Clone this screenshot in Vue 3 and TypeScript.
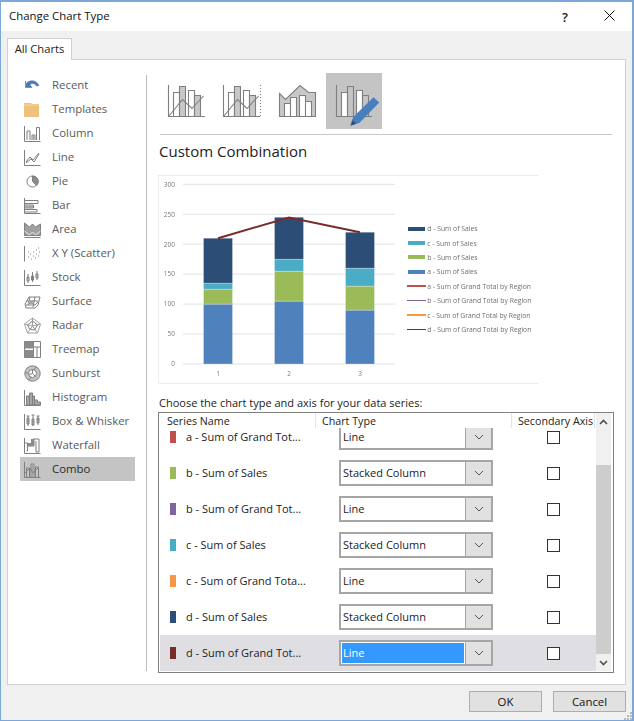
<script setup lang="ts">
const cats = [
  { n: 'Recent', i: 'recent' }, { n: 'Templates', i: 'templates' }, { n: 'Column', i: 'column' },
  { n: 'Line', i: 'line' }, { n: 'Pie', i: 'pie' }, { n: 'Bar', i: 'bar' }, { n: 'Area', i: 'area' },
  { n: 'X Y (Scatter)', i: 'scatter' }, { n: 'Stock', i: 'stock' }, { n: 'Surface', i: 'surface' },
  { n: 'Radar', i: 'radar' }, { n: 'Treemap', i: 'treemap' }, { n: 'Sunburst', i: 'sunburst' },
  { n: 'Histogram', i: 'histogram' }, { n: 'Box & Whisker', i: 'box' }, { n: 'Waterfall', i: 'waterfall' },
  { n: 'Combo', i: 'combo' },
]
const rows = [
  { n: 'a - Sum of Grand Tot...', c: '#c0504d', t: 'Line' },
  { n: 'b - Sum of Sales', c: '#9bbb59', t: 'Stacked Column' },
  { n: 'b - Sum of Grand Tot...', c: '#8064a2', t: 'Line' },
  { n: 'c - Sum of Sales', c: '#4bacc6', t: 'Stacked Column' },
  { n: 'c - Sum of Grand Tota...', c: '#f79646', t: 'Line' },
  { n: 'd - Sum of Sales', c: '#2c4d75', t: 'Stacked Column' },
  { n: 'd - Sum of Grand Tot...', c: '#772c2a', t: 'Line', sel: true },
]
const yTicks = [300, 250, 200, 150, 100, 50, 0]
const K = 0.599
const yOf = (v: number) => 188 - v * K
const bars = [
  { x: 59, s: [[0, 100, '#4f81bd'], [100, 125, '#9bbb59'], [125, 135, '#4bacc6'], [135, 210, '#2c4d75']] },
  { x: 130, s: [[0, 105, '#4f81bd'], [105, 155, '#9bbb59'], [155, 175, '#4bacc6'], [175, 245, '#2c4d75']] },
  { x: 201, s: [[0, 90, '#4f81bd'], [90, 130, '#9bbb59'], [130, 160, '#4bacc6'], [160, 220, '#2c4d75']] },
]
const legend = [
  { n: 'd - Sum of Sales', c: '#2c4d75', k: 'box' }, { n: 'c - Sum of Sales', c: '#4bacc6', k: 'box' },
  { n: 'b - Sum of Sales', c: '#9bbb59', k: 'box' }, { n: 'a - Sum of Sales', c: '#4f81bd', k: 'box' },
  { n: 'a - Sum of Grand Total by Region', c: '#c0504d', k: 'line' },
  { n: 'b - Sum of Grand Total by Region', c: '#8064a2', k: 'line' },
  { n: 'c - Sum of Grand Total by Region', c: '#f79646', k: 'line' },
  { n: 'd - Sum of Grand Total by Region', c: '#772c2a', k: 'line' },
]
</script>

<template>
  <div class="win">
    <header class="title">
      <span class="title-text">Change Chart Type</span>
      <span class="help">?</span>
      <svg class="close" width="11" height="11" viewBox="0 0 11 11"><path d="M.5.5l10 10M10.500.5l-10 10" stroke="#111" fill="none" /></svg>
    </header>

    <main class="body">
      <div class="tab">All Charts</div>
      <section class="panel">
        <nav class="side">
          <div v-for="c in cats" :key="c.n" class="cat" :class="{ on: c.i === 'combo' }">
            <svg class="ci" width="17" height="17" viewBox="0 0 17 17" fill="none" stroke="#7f7f7f">
              <template v-if="c.i === 'recent'"><path d="M2 7C5 2.500 12 2.500 15 8.500L12.500 9C10.500 6 7.500 6 6 8l2 2.500H1.500V4z" fill="#4a7ab5" stroke="#4a7ab5" stroke-width=".6" /></template>
              <template v-else-if="c.i === 'templates'"><path d="M0 2h7l1 1h7v13H0z" fill="#eec27d" stroke="none" /><path d="M0 4h15" stroke="#f5d9a8" /></template>
              <template v-else-if="c.i === 'column'"><path d="M.5 1v15.500h16M3 15V6h3v9M8 15v-5h3v5M12.500 15V2.500h3V15" /><path d="M8.500 10h2v5h-2z" fill="#a6a6a6" stroke="none" /></template>
              <template v-else-if="c.i === 'line'"><path d="M.5 1v15.500h16M2 13l4-5 3 3 6-7M2 14l5-4 3 3 5-8" /></template>
              <template v-else-if="c.i === 'pie'"><circle cx="8.500" cy="8.500" r="5.500" /><path d="M8.500 3v5.500l4 4A5.500 5.500 0 0 0 8.500 3z" fill="#8c8c8c" /></template>
              <template v-else-if="c.i === 'bar'"><path d="M.5 1v15.500h16M.5 3.500H14v3H.5M.5 8h9v3H.5M.5 12.500h12.500v2.500H.5" /><path d="M1 8.500h8V11H1z" fill="#a6a6a6" stroke="none" /></template>
              <template v-else-if="c.i === 'area'"><path d="M.5 2l5 4 3-3 3 3 5-3v11.500H.5z" fill="#a0a0a0" /><path d="M.5 10l5 4 3-3 3 3 5-4" stroke="#e8e8e8" /><path d="M.5 16.500h16" /></template>
              <template v-else-if="c.i === 'scatter'"><path d="M.5 1v15.500" /><path d="M4 12h1M7 14h1M6 9h1M9 11h1M9 7h1M12 9h1M12 5h1M14 3h1M14 11h1M4 7h1M11 13h1M15 7h1" /></template>
              <template v-else-if="c.i === 'stock'"><path d="M.5 1v15.500h16M4 5v9M8.500 3v10M13 2v9M3 8h2v4H3zM7.500 7h2v4h-2zM12 5h2v4h-2z" /></template>
              <template v-else-if="c.i === 'surface'"><path d="M1 11l4-7h11l-2 8-3 3H2zM3 8h11M6 4l-2 8M11 4L9 14M2 12h9l3-3" /><path d="M5 8l5-1-1 4H4z" fill="#a6a6a6" stroke="none" /></template>
              <template v-else-if="c.i === 'radar'"><path d="M8.500 1l8 6-3 9h-10l-3-9zM8.500 1v8M.5 7l8 2 8-2M3.500 16l5-7 5 7" stroke="#a0a0a0" /><path d="M8.500 4l5 4-3 5-5-1-2-4z" stroke="#7f7f7f" /></template>
              <template v-else-if="c.i === 'treemap'"><path d="M.5.5h16v16H.5zM9.500.5v16M9.500 6h7M13 6v10.500" /><path d="M.5.500h9v7h-9zM.5 9h9v7.500h-9z" fill="#8c8c8c" stroke="none" /></template>
              <template v-else-if="c.i === 'sunburst'"><circle cx="8.500" cy="8.500" r="7.700" fill="#c4c4c4" /><circle cx="8.500" cy="8.500" r="4" fill="#fff" /><path d="M8.500 4.500v4l3 3M8.500 8.500l-4 1M12 2l-2 3M1 8h3M5 15l2-3" /></template>
              <template v-else-if="c.i === 'histogram'"><path d="M.5 1v15.500h16" /><path d="M2.500 16V7h3V4h3v3h2v4h3v2h3v3z" fill="#a6a6a6" /><path d="M5.500 7v9M8.500 7v9M10.500 11v5" /></template>
              <template v-else-if="c.i === 'box'"><path d="M.5 1v15.500h16M4 3v10M9 2v11M14 3v9M2.500 3h3M7.500 2h3M12.500 3h3M3 5h2v6H3zM8 6h2v6H8zM13 5h2v5h-2zM3 8h2M8 9h2M13 7h2" /></template>
              <template v-else-if="c.i === 'waterfall'"><path d="M.5 1v15.500h16M.5 6h3v8h-1M7 9H4V6M7 9h3V2h-1M10 2h5v13h-3V4" /><path d="M4 6h3v3H4zM7 2h3v7H7z" fill="#8c8c8c" stroke="none" /></template>
              <template v-else><path d="M.5 1v15.500h16M2.500 16V7h3v9M7 16V3h3v13M11.500 16V6h3v10" /><path d="M7.500 3.500h2V16h-2z" fill="#a6a6a6" stroke="none" /><path d="M1 12l5-5 3 5 6-6" /></template>
            </svg>
            <span class="cn">{{ c.n }}</span>
          </div>
        </nav>

        <div class="main">
          <div class="types">
            <div class="ty">
              <svg width="56" height="56" viewBox="0 0 56 56" fill="none" stroke="#7f7f7f" stroke-width="1.100">
                <path d="M15.500 43.500V19.500h6v24zM30.500 43.500V17.500h6v26z" fill="#fff" />
                <path d="M21.500 43.500V13.500h6v30zM36.500 43.500V22.500h6v21z" fill="#c8c8c8" />
                <path d="M10.500 12v31.500H47M10.500 43.500l14-17 9.500 9 11.500-12.500" />
              </svg>
            </div>
            <div class="ty">
              <svg width="56" height="56" viewBox="0 0 56 56" fill="none" stroke="#7f7f7f" stroke-width="1.100">
                <path d="M14.500 43.500V19.500h6v24zM29.500 43.500V17.500h6v26z" fill="#fff" />
                <path d="M20.500 43.500V13.500h6v30zM35.500 43.500V22.500h6v21z" fill="#c8c8c8" />
                <path d="M9.500 12v31.500H46M9.500 43.500l14-17 9.500 9 11.500-12.500" />
                <path d="M46.500 12v31" stroke-dasharray="1 2" />
              </svg>
            </div>
            <div class="ty">
              <svg width="56" height="56" viewBox="0 0 56 56" fill="none" stroke="#7f7f7f" stroke-width="1.100">
                <path d="M9.500 20.500l6 6 14.500-14 8.500 7H45.500v24H9.500z" fill="#c8c8c8" />
                <path d="M14.500 43.500v-13h6v13zM20.500 43.500v-19h6v19zM29.500 43.500v-21h6v21zM35.500 43.500v-15h6v15z" fill="#fff" />
              </svg>
            </div>
            <div class="ty active">
              <svg width="56" height="56" viewBox="0 0 56 56" fill="none" stroke="#7f7f7f" stroke-width="1.100">
                <path d="M15.500 43.500V19.500h6v24zM30.500 43.500V17.500h6v26z" fill="#fff" />
                <path d="M21.500 43.500V13.500h6v30zM36.500 43.500V22.500h6v21z" />
                <path d="M10.500 12v31.500H46" />
                <path d="M25 52l2.500-7.500L47.500 25l5 4.500L33 49.500z" fill="#4a7fbd" stroke="#4a7fbd" />
                <path d="M25 52.500l1.500-5 3.500 3.300z" fill="#2c4d75" stroke="none" />
              </svg>
            </div>
          </div>
          <h2 class="sub">Custom Combination</h2>

          <div class="chart">
            <svg class="plot" width="238" height="207" viewBox="0 0 238 207">
              <g v-for="v in yTicks" :key="v">
                <line x1="24" x2="236" :y1="yOf(v)" :y2="yOf(v)" stroke="#e2e2e2" />
                <text x="16" :y="yOf(v) + 2.300" text-anchor="end" class="ax">{{ v }}</text>
              </g>
              <g v-for="(b, i) in bars" :key="i">
                <rect v-for="(s, j) in b.s" :key="j" :x="b.x - 14.500" :y="yOf(s[1] as number)" width="29" :height="((s[1] as number) - (s[0] as number)) * K" :fill="s[2] as string" stroke="#fff" stroke-opacity=".4" stroke-width=".7" />
                <text :x="b.x" y="199.500" text-anchor="middle" class="ax">{{ i + 1 }}</text>
              </g>
              <polyline points="59,62.200 130,41.500 201,56.200" fill="none" stroke="#772c2a" stroke-width="2" />
            </svg>
            <ul class="legend">
              <li v-for="l in legend" :key="l.n">
                <i :class="l.k" :style="{ background: l.c }"></i><span>{{ l.n }}</span>
              </li>
            </ul>
          </div>

          <div class="ask">Choose the chart type and axis for your data series:</div>
          <div class="grid">
            <div class="list">
              <div class="ghead">
                <span class="h1">Series Name</span><span class="h2">Chart Type</span><span class="h3">Secondary Axis</span>
              </div>
              <div class="rows">
                <div v-for="(r, i) in rows" :key="i" class="row" :class="{ sel: r.sel, first: i === 0 }">
                  <span class="sw" :style="{ background: r.c }"></span>
                  <span class="sn">{{ r.n }}</span>
                  <span class="combo">
                    <span class="val"><em :class="{ hl: r.sel }">{{ r.t }}</em></span>
                    <span class="arrow"><svg width="10" height="6" viewBox="0 0 10 6"><path d="M1 1l4 4 4-4" fill="none" stroke="#555" /></svg></span>
                  </span>
                  <span class="ck"></span>
                </div>
              </div>
            </div>
            <div class="sb">
              <div class="sbb"><svg width="9" height="6" viewBox="0 0 9 6"><path d="M1 5l3.500-3.500L8 5" fill="none" stroke="#505050" stroke-width="1.600" /></svg></div>
              <div class="track"><div class="thumb"></div></div>
              <div class="sbb"><svg width="9" height="6" viewBox="0 0 9 6"><path d="M1 1l3.500 3.500L8 1" fill="none" stroke="#505050" stroke-width="1.600" /></svg></div>
            </div>
          </div>
        </div>
      </section>
      <footer class="foot">
        <button class="btn">OK</button>
        <button class="btn">Cancel</button>
      </footer>
    </main>
    <svg class="grip" width="8" height="8" viewBox="0 0 8 8" fill="#b8b8b8"><path d="M6 0h2v2H6zM3 3h2v2H3zM6 3h2v2H6zM0 6h2v2H0zM3 6h2v2H3zM6 6h2v2H6z" /></svg>
  </div>
</template>

<style scoped>
.win { width: 634px; height: 721px; box-sizing: border-box; border: 1px solid #7ba7d9; border-top-width: 2px; border-right-width: 2px; display: flex; flex-direction: column; font-family: "Open Sans", "Noto Sans", sans-serif; font-size: 11px; color: #222; background: #f0f0f0; overflow: hidden; position: relative; }
.title { height: 29px; flex: none; background: #fff; display: flex; align-items: center; padding-left: 8px; }
.title-text { font-size: 11.400px; color: #111; flex: 1; margin-top: -2px; }
.help { font-size: 13px; font-weight: 600; margin-right: 36px; color: #222; }
.close { margin: -2px 17px 0 0; }
.body { flex: 1; display: flex; flex-direction: column; padding: 7px 6px 0 6px; min-height: 0; }
.tab { width: 65px; height: 22px; box-sizing: border-box; background: #fff; border: 1px solid #d0d0d0; border-bottom: 0; text-align: center; line-height: 20px; color: #222; font-size: 11.200px; margin-bottom: -1px; position: relative; z-index: 1; }
.panel { height: 626px; box-sizing: border-box; flex: none; background: #fff; border: 1px solid #d0d0d0; display: flex; padding-top: 13px; }
.side { width: 139px; box-sizing: border-box; height: 596px; padding: 0 11px 0 12px; flex: none; border-right: 1px solid #bbb; margin-top: 2px; font-size: 11.400px; }
.cat { height: 24px; display: flex; align-items: center; padding-left: 4px; color: #5a5a5a; }
.cat:first-child { margin-top: -2px; }
.cat.on { background: #c4c4c4; color: #2a2a2a; }
.ci { flex: none; width: 17px; height: 17px; }
.cn { margin: -2px 0 0 11px; white-space: nowrap; }
.main { width: 453px; margin-left: 12px; display: flex; flex-direction: column; }
.types { display: flex; height: 61px; flex: none; border-bottom: 1px solid #c8c8c8; margin-left: 1px; }
.ty { width: 56px; height: 56px; }
.ty:first-child { margin-left: -2px; }
.ty.active { background: #c4c4c4; }
.sub { margin: 5px 0 0; font-size: 15px; font-weight: 400; line-height: 22px; height: 22px; color: #222; }
.chart { margin: 13px 0 0 -1px; width: 380px; height: 209px; box-sizing: border-box; background: #fff; border: 1px solid #ececec; border-right: 0; display: flex; filter: blur(.3px); }
.plot { flex: none; display: block; }
.ax { font-size: 6.500px; fill: #7a7a7a; font-family: "Open Sans", sans-serif; }
.legend { list-style: none; margin: 45.500px 0 0 10.300px; padding: 0; display: flex; flex-direction: column; }
.legend li { display: flex; align-items: center; height: 14.400px; color: #6e6e6e; font-size: 6.800px; white-space: nowrap; }
.legend i { display: block; flex: none; }
.legend i.box { width: 16.700px; height: 4px; margin: 0 2.300px 0 1px; }
.legend i.line { width: 18.700px; height: 1.700px; margin-right: 1.300px; }
.ask { margin-top: 11px; line-height: 16px; height: 16px; color: #222; font-size: 11px; white-space: nowrap; }
.grid { margin: 1px 0 0 -1px; width: 456px; height: 261px; box-sizing: border-box; border: 1px solid #7f7f7f; display: flex; background: #fff; }
.list { width: 437px; flex: none; position: relative; overflow: hidden; display: flex; flex-direction: column; }
.ghead { height: 15px; display: flex; flex: none; color: #222; line-height: 16px; position: relative; z-index: 1; background: #fff; white-space: nowrap; font-size: 10.700px; }
.h1 { width: 157px; padding-left: 8px; box-sizing: border-box; border-right: 1px solid #e4e4e4; }
.h2 { width: 196px; padding-left: 6px; box-sizing: border-box; border-right: 1px solid #e4e4e4; }
.h3 { width: 83px; padding-left: 6px; box-sizing: border-box; border-right: 1px solid #e4e4e4; }
.rows { display: flex; flex-direction: column; flex: 1; padding-left: 1px; }
.row { height: 36px; flex: none; display: flex; align-items: center; color: #222; }
.row.first { margin-top: -9px; }
.row.sel { background: #dfdfe3; }
.sw { width: 6px; height: 12px; margin-left: 10px; flex: none; }
.sn { width: 153px; margin: -2px 0 0 10px; white-space: nowrap; flex: none; }
.combo { width: 154px; height: 26px; box-sizing: border-box; border: 2px solid #a6a6a6; display: flex; flex: none; }
.val { flex: 1; min-width: 0; background: #fff; display: flex; align-items: center; padding: 1px; }
.val em { font-style: normal; display: block; width: 100%; height: 100%; line-height: 20px; padding-left: 1px; }
.val em.hl { background: #3399ff; color: #fff; }
.arrow { width: 25px; border-left: 1px solid #a6a6a6; background: #e1e1e1; display: flex; align-items: center; justify-content: center; flex: none; }
.ck { width: 13px; height: 13px; box-sizing: border-box; border: 1px solid #333; background: #fff; display: block; flex: none; margin-left: 54px; }
.sb { width: 15px; flex: none; background: #f0f0f0; display: flex; flex-direction: column; margin-bottom: 1px; }
.sbb { height: 17px; display: flex; align-items: center; justify-content: center; flex: none; }
.track { flex: 1; padding-top: 35px; display: flex; flex-direction: column; }
.thumb { flex: 1; background: #cdcdcd; }
.foot { display: flex; justify-content: flex-end; gap: 11px; padding: 6px 0 0; }
.btn { width: 73px; height: 21px; box-sizing: border-box; border: 1px solid #adadad; background: #e1e1e1; font: inherit; font-size: 11.400px; color: #111; padding: 0; }
.grip { position: absolute; right: 0; bottom: 0; }
</style>
<style>
html, body { margin: 0; background: #f0f0f0; }
</style>
